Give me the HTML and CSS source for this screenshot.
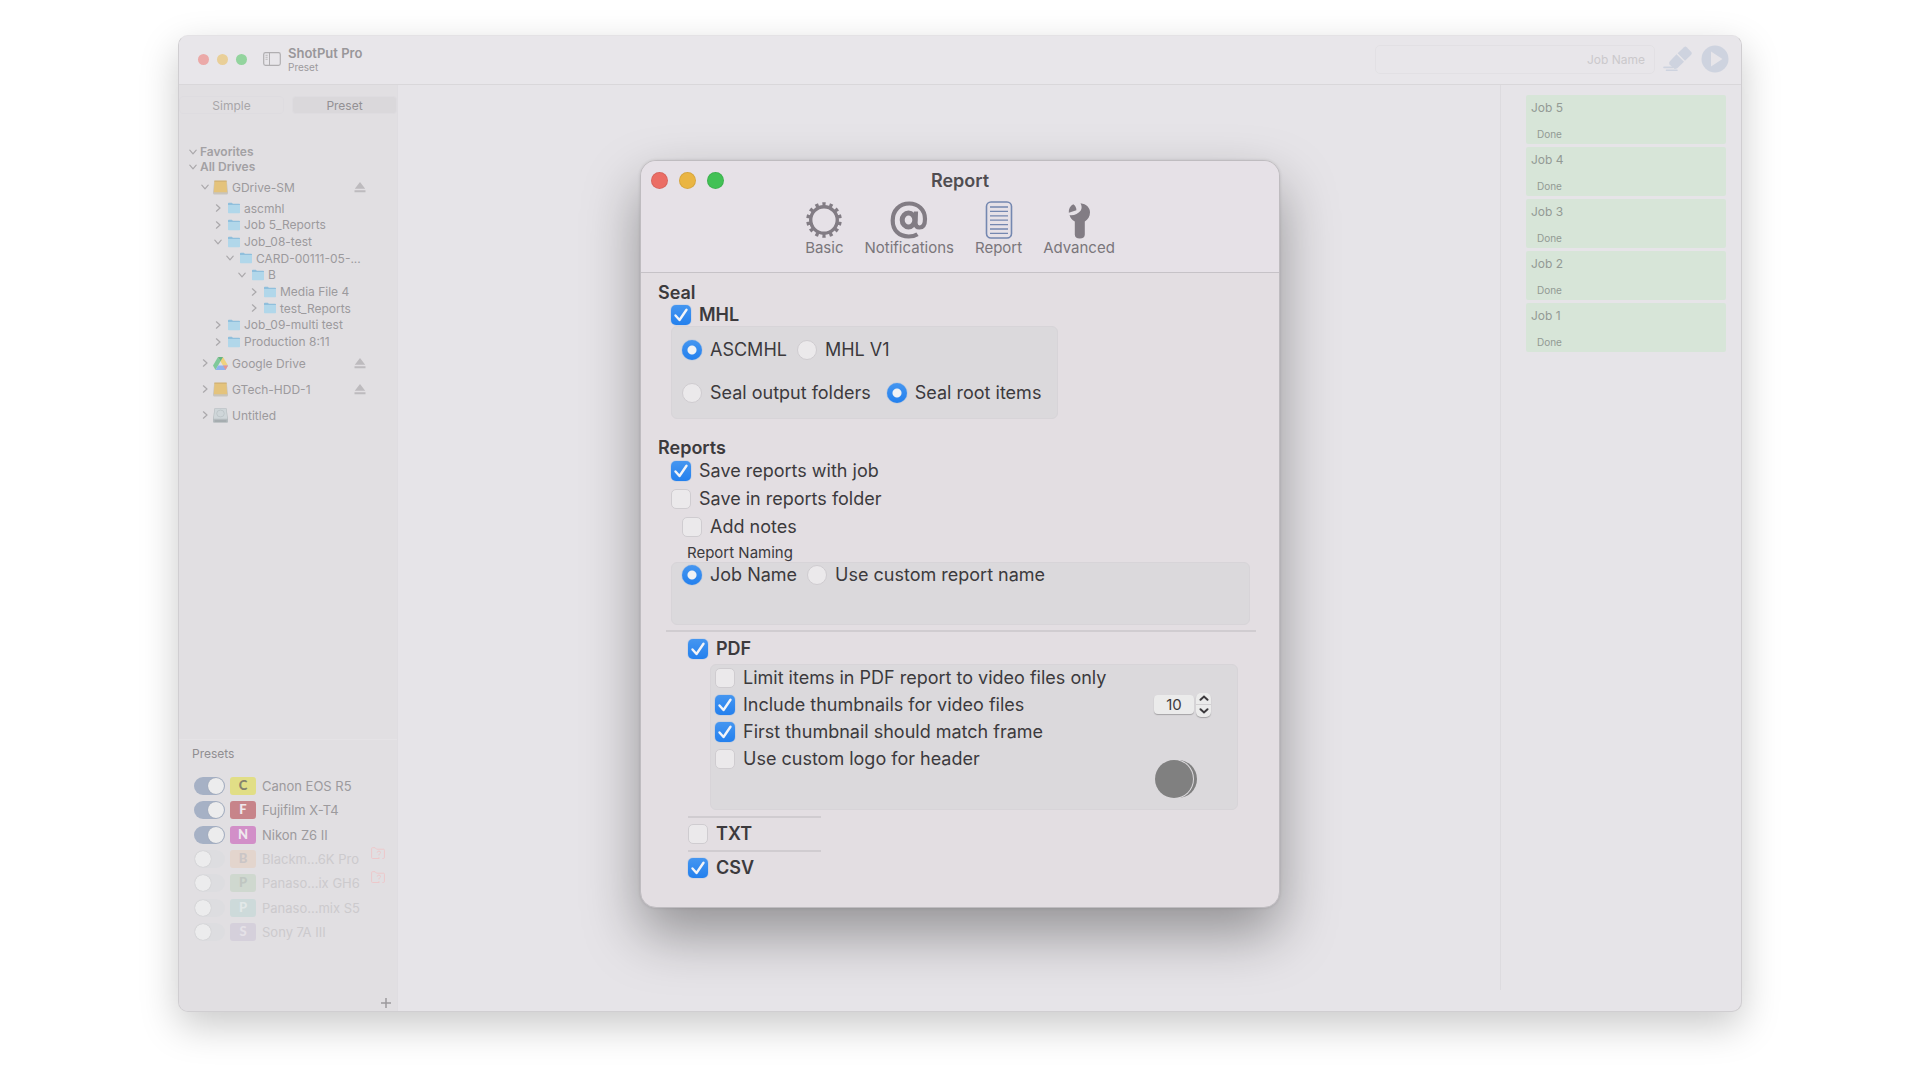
FILE: index.html
```
<!DOCTYPE html>
<html lang="en">
<head>
    <meta charset="UTF-8">
    <meta name="viewport" content="width=device-width, initial-scale=1.0">
    <title>ShotPut Pro - Report</title>
    <link rel="stylesheet" href="styles.css">
</head>
<body>
    <svg class="sprite" aria-hidden="true">
        <symbol id="down" viewBox="0 0 10 10"><path d="M1.8 3.2 5 6.8 8.2 3.2" fill="none" stroke="currentColor" stroke-width="1.2" stroke-linecap="round" stroke-linejoin="round"/></symbol>
        <symbol id="right" viewBox="0 0 10 10"><path d="M3.4 1.8 7 5 3.4 8.2" fill="none" stroke="currentColor" stroke-width="1.2" stroke-linecap="round" stroke-linejoin="round"/></symbol>
        <symbol id="folder" viewBox="0 0 12 12"><path d="M0 1.5q0-.8.8-.8h3l1.1 1h6.3q.8 0 .8.8V6H0z" fill="#90bfdc"/><path d="M0 3h12v7.6q0 .7-.7.7H.7q-.7 0-.7-.7z" fill="#b1d7ea"/></symbol>
        <symbol id="drive" viewBox="0 0 15 15"><path d="M1.2.5h12.6L15 12.6q0 1.9-1 1.9H1q-1 0-1-1.9z" fill="#c9c5bd"/><path d="M1.6.7h11.8l.8 11.6H.8z" fill="#e4c37c"/><path d="M1.6.7h11.8l.1 1.4h-12z" fill="#d5b575"/></symbol>
        <symbol id="eject" viewBox="0 0 12 11"><path d="M6 0l5.2 6.8H.8zM.5 8.2h11v2H.5z" fill="#bdbbbe"/></symbol>
        <symbol id="missing" viewBox="0 0 14 13"><path d="M8.5 11.5H1.6q-1 0-1-1V1.6q0-.9.9-.9h2.6l1.5 1.5h6.8q1 0 1 1v7.3q0 1-1 1h-1M6.2 5.6q.2-1.5 1.7-1.5t1.6 1.4q0 .8-.9 1.4-.7.5-.7 1.5M7.9 10.2v.8" fill="none" stroke="#edc8ca"/></symbol>
    </svg>

    <div class="desktop">
        <div class="window">
            <header class="titlebar">
                <div class="lights">
                    <button class="light red" aria-label="Close"></button>
                    <button class="light yellow" aria-label="Minimize"></button>
                    <button class="light green" aria-label="Zoom"></button>
                </div>
                <button class="sidebar-toggle" aria-label="Toggle sidebar">
                    <svg width="18" height="14" viewBox="0 0 18 14" fill="none" stroke="currentColor"><rect x=".7" y=".7" width="16.6" height="12.6" rx="1.8" stroke-width="1.2"/><path d="M6.5 1v12"/><path d="M2.5 3.3h2.2M2.5 5.3h2.2M2.5 7.3h2.2" stroke-width=".8"/></svg>
                </button>
                <div class="app-name">
                    <h1>ShotPut Pro</h1>
                    <p>Preset</p>
                </div>
                <input class="job-input" type="text" placeholder="Job Name" aria-label="Job Name">
                <button class="tool" aria-label="Clear">
                    <svg width="30" height="26" viewBox="0 0 30 26"><path d="M14.6 7.2 21 1.2q1.4-1.2 2.7 0l4.6 4.8q1.2 1.3-.1 2.7l-6.2 6z" fill="currentColor"/><path d="M13.5 8.2 21 15.8 14.5 22q-1.2 1-3 1L6.5 18.4q-1-1.6.4-3.2z" fill="currentColor"/><path d="M1 21.4h8.5M3.5 24.2h10.5" stroke="currentColor" stroke-width="1.6" stroke-linecap="round"/></svg>
                </button>
                <button class="tool" aria-label="Start">
                    <svg width="28" height="28" viewBox="0 0 28 28"><circle cx="14" cy="14" r="13.5" fill="currentColor"/><path d="M10 6.5v15L21.5 14z" fill="#e7e5e9"/></svg>
                </button>
            </header>

            <div class="content">
                <aside class="sidebar">
                    <div class="modes">
                        <button>Simple</button>
                        <button class="active">Preset</button>
                    </div>

                    <ul class="tree">
                        <li class="group"><svg class="arrow"><use href="#down"/></svg>Favorites</li>
                        <li class="group"><svg class="arrow"><use href="#down"/></svg>All Drives</li>
                        <li class="volume"><svg class="arrow"><use href="#down"/></svg><svg class="disk"><use href="#drive"/></svg>GDrive-SM
                            <button class="eject" aria-label="Eject GDrive-SM"><svg><use href="#eject"/></svg></button></li>
                        <li>
                            <ul class="folders">
                                <li><svg class="arrow"><use href="#right"/></svg><svg class="folder"><use href="#folder"/></svg>ascmhl</li>
                                <li><svg class="arrow"><use href="#right"/></svg><svg class="folder"><use href="#folder"/></svg>Job 5_Reports</li>
                                <li><svg class="arrow"><use href="#down"/></svg><svg class="folder"><use href="#folder"/></svg>Job_08-test</li>
                                <li class="depth-2"><svg class="arrow"><use href="#down"/></svg><svg class="folder"><use href="#folder"/></svg>CARD-00111-05-...</li>
                                <li class="depth-3"><svg class="arrow"><use href="#down"/></svg><svg class="folder"><use href="#folder"/></svg>B</li>
                                <li class="depth-4"><svg class="arrow"><use href="#right"/></svg><svg class="folder"><use href="#folder"/></svg>Media File 4</li>
                                <li class="depth-4"><svg class="arrow"><use href="#right"/></svg><svg class="folder"><use href="#folder"/></svg>test_Reports</li>
                                <li><svg class="arrow"><use href="#right"/></svg><svg class="folder"><use href="#folder"/></svg>Job_09-multi test</li>
                                <li><svg class="arrow"><use href="#right"/></svg><svg class="folder"><use href="#folder"/></svg>Production 8:11</li>
                            </ul>
                        </li>
                        <li class="volume"><svg class="arrow"><use href="#right"/></svg><svg class="disk" viewBox="0 0 15 15"><path d="M5 1h5l5 8.6h-5z" fill="#efd27e"/><path d="M5 1 0 9.6 2.5 14l5-8.7z" fill="#7fc99a"/><path d="M5 1h5L7.5 5.3z" fill="#66b583"/><path d="M5 9.6h10L12.5 14h-10z" fill="#8fb3ee"/><path d="M10 9.6h5L12.5 14z" fill="#e7958f"/></svg>Google Drive
                            <button class="eject" aria-label="Eject Google Drive"><svg><use href="#eject"/></svg></button></li>
                        <li class="volume"><svg class="arrow"><use href="#right"/></svg><svg class="disk"><use href="#drive"/></svg>GTech-HDD-1
                            <button class="eject" aria-label="Eject GTech-HDD-1"><svg><use href="#eject"/></svg></button></li>
                        <li class="volume"><svg class="arrow"><use href="#right"/></svg><svg class="disk" viewBox="0 0 15 15"><path d="M1.5.3h12L15 11v2.5q0 1.2-1 1.2H1q-1 0-1-1.2V11z" fill="#b5bcbf"/><path d="M2 .8h11l1.3 10H.7z" fill="#cfd6d9"/><ellipse cx="7.5" cy="5.5" rx="3.8" ry="3.4" fill="none" stroke="#bfc7ca"/><path d="M1.5 13h12" stroke="#969da0"/></svg>Untitled</li>
                    </ul>

                    <section class="presets">
                        <h2>Presets</h2>
                        <ul>
                            <li><label><input type="checkbox" role="switch" checked><span class="badge canon">C</span>Canon EOS R5</label></li>
                            <li><label><input type="checkbox" role="switch" checked><span class="badge fuji">F</span>Fujifilm X-T4</label></li>
                            <li><label><input type="checkbox" role="switch" checked><span class="badge nikon">N</span>Nikon Z6 II</label></li>
                            <li class="off"><label><input type="checkbox" role="switch"><span class="badge black">B</span>Blackm...6K Pro</label><svg class="missing"><use href="#missing"/></svg></li>
                            <li class="off"><label><input type="checkbox" role="switch"><span class="badge gh6">P</span>Panaso...ix GH6</label><svg class="missing"><use href="#missing"/></svg></li>
                            <li class="off"><label><input type="checkbox" role="switch"><span class="badge s5">P</span>Panaso...mix S5</label></li>
                            <li class="off"><label><input type="checkbox" role="switch"><span class="badge sony">S</span>Sony 7A III</label></li>
                        </ul>
                        <button class="add" aria-label="Add preset"><svg width="12" height="12" viewBox="0 0 12 12"><path d="M6 1v10M1 6h10" stroke="currentColor" stroke-width="1.5"/></svg></button>
                    </section>
                </aside>

                <main class="workspace"></main>

                <aside class="jobs">
                    <article class="job"><h3>Job 5</h3><p>Done</p></article>
                    <article class="job"><h3>Job 4</h3><p>Done</p></article>
                    <article class="job"><h3>Job 3</h3><p>Done</p></article>
                    <article class="job"><h3>Job 2</h3><p>Done</p></article>
                    <article class="job"><h3>Job 1</h3><p>Done</p></article>
                </aside>
            </div>
        </div>
    </div>

    <div class="overlay">
        <div class="dialog" role="dialog" aria-labelledby="dialogTitle">
            <header class="dialog-head">
                <div class="dialog-bar">
                    <div class="lights">
                        <button class="light red" aria-label="Close"></button>
                        <button class="light yellow" aria-label="Minimize"></button>
                        <button class="light green" aria-label="Zoom"></button>
                    </div>
                    <h2 id="dialogTitle">Report</h2>
                </div>
                <nav class="tabs">
                    <button>
                        <svg width="38" height="38" viewBox="0 0 38 38" fill="none" stroke="currentColor"><circle cx="19" cy="19" r="13.3" stroke-width="3.4"/><circle cx="19" cy="19" r="15.8" stroke-width="4" pathLength="140" stroke-dasharray="4.6 5.4" stroke-dashoffset="2.3" transform="rotate(-90 19 19)"/></svg>
                        Basic
                    </button>
                    <button>
                        <svg width="38" height="38" viewBox="0 0 38 38" fill="none" stroke="currentColor"><ellipse cx="18.5" cy="19" rx="6.3" ry="7" stroke-width="5"/><path d="M26 10.5 25.5 22q0 4.5 4 4.5 5.5 0 5.5-8.5C35 8.5 28 2.5 19.3 2.5 9.5 2.5 2.7 9.5 2.7 19.5c0 9.5 6 16 16 16 3.5 0 6.3-.7 8.8-2.3" stroke-width="4.2"/></svg>
                        Notifications
                    </button>
                    <button aria-current="page">
                        <svg width="38" height="38" viewBox="0 0 38 38" fill="none" stroke="#7487b0"><rect x="6.5" y="1" width="25" height="36" rx="4.5" stroke-width="1.6"/><path d="M10 6h18M10 10.4h18M10 14.8h18M10 19.2h18M10 23.6h18M10 28h18M10 32.4h18" stroke-width="1.3"/></svg>
                        Report
                    </button>
                    <button>
                        <svg width="38" height="38" viewBox="0 0 38 38" fill="currentColor"><path d="M20.5 2.2c6 .8 9.5 4.500 9.500 9 0 4.300-2 7.300-5.200 9.300V33.500q0 4-5 4t-5-4V20.500c-2.800-1.300-4.700-3.600-5.200-6.500 4 .8 8.500-1.300 11-4.300 1.500-2.300 1.300-5-.1-7.500z"/><path d="M13.200 3.300c2 .8 3.300 3.800 3.200 6l-7.600 2.500c-.4-3.600 1.300-6.900 4.400-8.500z"/></svg>
                        Advanced
                    </button>
                </nav>
            </header>

            <form class="dialog-body">
                <section class="seal">
                    <h3>Seal</h3>
                    <label class="option strong"><input type="checkbox" checked>MHL</label>
                    <div class="panel seal-panel">
                        <div class="row">
                            <label class="option"><input type="radio" name="format" checked>ASCMHL</label>
                            <label class="option"><input type="radio" name="format">MHL V1</label>
                        </div>
                        <div class="row wide">
                            <label class="option"><input type="radio" name="target">Seal output folders</label>
                            <label class="option"><input type="radio" name="target" checked>Seal root items</label>
                        </div>
                    </div>
                </section>

                <section class="reports">
                    <h3>Reports</h3>
                    <div class="stack">
                        <label class="option"><input type="checkbox" checked>Save reports with job</label>
                        <label class="option"><input type="checkbox">Save in reports folder</label>
                        <label class="option nested"><input type="checkbox">Add notes</label>
                    </div>
                    <p class="caption">Report Naming</p>
                    <div class="panel naming-panel">
                        <div class="row">
                            <label class="option"><input type="radio" name="naming" checked>Job Name</label>
                            <label class="option"><input type="radio" name="naming">Use custom report name</label>
                        </div>
                    </div>
                </section>
                <hr>

                <section class="formats">
                    <label class="option strong"><input type="checkbox" checked>PDF</label>
                    <div class="panel pdf-panel">
                        <div class="stack">
                            <label class="option"><input type="checkbox">Limit items in PDF report to video files only</label>
                            <label class="option"><input type="checkbox" checked>Include thumbnails for video files</label>
                            <label class="option"><input type="checkbox" checked>First thumbnail should match frame</label>
                            <label class="option"><input type="checkbox">Use custom logo for header</label>
                        </div>
                        <div class="side">
                            <div class="counter">
                                <input type="text" value="10" aria-label="Number of thumbnails">
                                <div class="stepper">
                                    <button type="button" aria-label="Increase"><svg width="10" height="6" viewBox="0 0 10 6"><path d="M1.5 4.8 5 1.5l3.5 3.3"/></svg></button>
                                    <button type="button" aria-label="Decrease"><svg width="10" height="6" viewBox="0 0 10 6"><path d="M1.5 1.2 5 4.5l3.5-3.3"/></svg></button>
                                </div>
                            </div>
                            <svg class="logo" width="44" height="40" viewBox="0 0 44 40" fill="#808080"><circle cx="24" cy="20" r="19"/><circle cx="20" cy="20" r="20" fill="#dbd9dc"/><circle cx="20" cy="20" r="19"/></svg>
                        </div>
                    </div>
                    <hr>
                    <label class="option strong"><input type="checkbox">TXT</label>
                    <hr>
                    <label class="option strong"><input type="checkbox" checked>CSV</label>
                </section>
            </form>
        </div>
    </div>
</body>
</html>
```

FILE: styles.css
```
:root {
    --window: #e6e4e8;
    --faded: #9c9a9d;
    --panel: #dbd9dc;
    --text: #3c3a3d;
}

* {
    box-sizing: border-box;
    margin: 0;
    padding: 0;
    font-family: Inter, 'Liberation Sans', sans-serif;
}

body {
    background: white;
    color: var(--text);
}

button {
    background: none;
    border: none;
    color: inherit;
}

ul {
    list-style: none;
}

.sprite {
    display: none;
}

/* main window */

.desktop {
    display: flex;
    min-height: 100vh;
    padding: 35px 178px 68px;
}

.window {
    display: flex;
    flex-direction: column;
    flex: 1;
    overflow: hidden;
    background: var(--window);
    border: 1px solid #d0ced1;
    border-top-color: #e4e2e5;
    border-radius: 10px;
    box-shadow: 0 14px 38px rgba(0, 0, 0, 0.21);
    color: var(--faded);
    font-size: 12px;
}

.titlebar {
    display: flex;
    align-items: center;
    height: 49px;
    padding: 0 12px 2px 19px;
    background: #e8e6ea;
    border-bottom: 1px solid #d9d7da;
}

.lights {
    display: flex;
    gap: 8px;
}

.light {
    width: 11px;
    height: 11px;
    border-radius: 50%;
}

.light.red {
    background: #eba9a8;
}

.light.yellow {
    background: #e9cf98;
}

.light.green {
    background: #93d49e;
}

.sidebar-toggle {
    display: flex;
    margin: 0 7px 0 16px;
    color: #b0aeb1;
}

.app-name h1 {
    color: #99979a;
    font-size: 13px;
    font-weight: 600;
    line-height: 15px;
}

.app-name p {
    font-size: 10px;
    line-height: 12px;
}

.job-input {
    width: 280px;
    height: 29px;
    margin-left: auto;
    padding: 0 9px;
    background: none;
    border: 1px solid #e2e0e4;
    border-radius: 5px;
    font-size: 12px;
    text-align: right;
}

.job-input::placeholder {
    color: #cbc9cc;
}

.tool {
    display: flex;
    margin-left: 8px;
    color: #ced3df;
}

.content {
    display: flex;
    flex: 1;
}

/* sidebar */

.sidebar {
    display: flex;
    flex-direction: column;
    width: 219px;
    background: #e1dfe2;
    border-right: 1px solid #dfdde1;
}

.modes {
    display: grid;
    grid-template-columns: 1fr 1fr;
    gap: 8px;
    padding-top: 11px;
}

.modes button {
    height: 18px;
    border: 1px solid #dedce0;
    border-radius: 4px;
    color: #a8a6a9;
    font-size: 12px;
}

.modes .active {
    background: #dad8db;
    color: #939194;
}

.tree {
    margin-top: 30px;
}

.tree svg {
    flex: none;
}

.arrow {
    width: 10px;
    height: 10px;
    color: #aaa8ab;
}

.group {
    display: flex;
    align-items: center;
    gap: 2px;
    height: 15px;
    padding-left: 9px;
    color: #a3a1a4;
    font-weight: 600;
}

.volume {
    display: flex;
    align-items: center;
    height: 26px;
    padding-left: 21px;
}

.disk {
    width: 15px;
    height: 15px;
    margin: 0 4px 0 3px;
}

.eject {
    display: flex;
    margin: 0 31px 0 auto;
}

.eject svg {
    width: 12px;
    height: 11px;
}

.folders {
    display: grid;
    grid-auto-rows: 1fr;
    height: 150px;
}

.folders li {
    display: flex;
    align-items: center;
    padding-left: 34px;
}

.folders .depth-2 {
    padding-left: 46px;
}

.folders .depth-3 {
    padding-left: 58px;
}

.folders .depth-4 {
    padding-left: 70px;
}

.folder {
    width: 12px;
    height: 12px;
    margin: 0 4px 0 5px;
}

.presets {
    display: flex;
    flex-direction: column;
    height: 272px;
    margin-top: auto;
    padding: 5px 0 2px;
    border-top: 1px solid #e5e3e6;
}

.presets h2 {
    padding-left: 13px;
    color: #908e91;
    font-size: 12px;
    font-weight: 400;
    line-height: 18px;
}

.presets ul {
    display: grid;
    grid-auto-rows: 1fr;
    height: 170px;
    margin-top: 11px;
}

.presets li {
    display: flex;
    justify-content: space-between;
    padding: 0 12px 0 15px;
    font-size: 13px;
}

.presets label {
    display: flex;
    align-items: center;
}

.presets input {
    appearance: none;
    width: 31px;
    height: 18px;
    padding: 1px;
    background: #dddde0;
    border-radius: 9px;
}

.presets input::before {
    content: '';
    display: block;
    width: 16px;
    height: 16px;
    border-radius: 50%;
    background: #ececed;
    box-shadow: 0 0 1px rgba(0, 0, 0, 0.2);
}

.presets input:checked {
    background: #a6b1c5;
}

.presets input:checked::before {
    margin-left: auto;
}

.badge {
    width: 26px;
    height: 18px;
    margin: 0 6px 0 5px;
    border-radius: 3px;
    color: #efe8ed;
    font-family: Lato, sans-serif;
    font-size: 13px;
    font-weight: 900;
    line-height: 17px;
    text-align: center;
}

.canon {
    background: #e1de86;
    color: #85836d;
}

.fuji {
    background: #c7848a;
}

.nikon {
    background: #d28fc8;
}

.black {
    background: #e3d5cd;
    color: #cac5c6;
}

.gh6 {
    background: #cfd8cf;
    color: #bfc6c1;
}

.s5 {
    background: #cddada;
    color: #e2e8e8;
}

.sony {
    background: #d5d0db;
    color: #e5e2e8;
}

.off {
    color: #cccacd;
}

.missing {
    width: 14px;
    height: 13px;
}

.add {
    display: flex;
    margin: auto 5px 0 auto;
}

/* job queue */

.workspace {
    flex: 1;
}

.jobs {
    display: flex;
    flex-direction: column;
    gap: 3px;
    width: 241px;
    margin-bottom: 21px;
    padding: 10px 15px 0 25px;
    border-left: 1px solid #dddbdf;
}

.job {
    height: 49px;
    padding: 5px;
    background: #d7e5d8;
    border-radius: 2px;
}

.job h3 {
    color: #939a95;
    font-size: 12px;
    font-weight: 400;
    line-height: 16px;
}

.job p {
    margin-top: 12px;
    padding-left: 6px;
    color: #929a94;
    font-size: 10px;
    line-height: 12px;
}

/* report dialog */

.overlay {
    position: absolute;
    inset: 0;
    display: flex;
    align-items: center;
    justify-content: center;
    padding-bottom: 13px;
}

.dialog {
    width: 640px;
    overflow: hidden;
    background: #e3dee2;
    border: 1px solid #bfbcc0;
    border-radius: 16px;
    box-shadow: 0 0 3px rgba(0, 0, 0, 0.12), 0 26px 56px rgba(0, 0, 0, 0.36);
}

.dialog-head {
    height: 112px;
    background: #e6e1e7;
    border-bottom: 1px solid #c6c2c7;
}

.dialog-bar {
    display: grid;
    grid-template-columns: 1fr auto 1fr;
    align-items: center;
    height: 40px;
}

.dialog-bar .lights {
    gap: 11px;
    padding-left: 10px;
}

.dialog-bar .light {
    width: 17px;
    height: 17px;
    border: 1px solid rgba(0, 0, 0, 0.08);
}

.dialog-bar .red {
    background: #eb6d65;
}

.dialog-bar .yellow {
    background: #eab543;
}

.dialog-bar .green {
    background: #42c155;
}

.dialog-bar h2 {
    color: #504d51;
    font-size: 18px;
    font-weight: 600;
}

.tabs {
    display: flex;
    justify-content: center;
    gap: 21px;
}

.tabs button {
    display: flex;
    flex-direction: column;
    align-items: center;
    color: #7a767b;
    font-size: 15px;
    line-height: 17px;
}

.tabs svg {
    color: #827c84;
}

.dialog-body {
    padding: 9px 23px 23px 17px;
    font-size: 18px;
}

.dialog-body h3 {
    font-size: 18px;
    font-weight: 600;
    line-height: 22px;
}

.dialog-body hr {
    border: none;
    border-top: 2px solid #d0ccd0;
}

.option {
    display: flex;
    align-items: center;
    gap: 8px;
    height: 24px;
    white-space: nowrap;
}

.strong {
    font-weight: 600;
}

.option input {
    appearance: none;
    flex: none;
    width: 20px;
    height: 20px;
    background: #ebe9eb;
    border: 1px solid #cfccd0;
    border-radius: 5px;
}

.option input[type="radio"] {
    border-radius: 50%;
}

.option input:checked {
    border: none;
    background: linear-gradient(#4596f0, #2380ee);
    box-shadow: 0 0 1px #2c83e8;
}

.option input[type="checkbox"]:checked {
    background: url("data:image/svg+xml,%3Csvg xmlns='http://www.w3.org/2000/svg' viewBox='0 0 20 20'%3E%3Cpath d='M4.5 10.5 8.5 15 15.5 4.8' fill='none' stroke='%23f2f4f8' stroke-width='2.4' stroke-linecap='round' stroke-linejoin='round'/%3E%3C/svg%3E"), linear-gradient(#4596f0, #2380ee);
}

.option input[type="radio"]:checked {
    background: radial-gradient(circle, #f0f2f5 0 4px, transparent 5px), linear-gradient(#4596f0, #2380ee);
}

.panel {
    background: var(--panel);
    border: 1px solid #d7d4d8;
    border-radius: 6px;
}

.row {
    display: flex;
    gap: 10px;
}

.row.wide {
    gap: 16px;
}

.seal > .option {
    height: 22px;
    margin-left: 13px;
}

.seal-panel {
    display: flex;
    flex-direction: column;
    gap: 19px;
    width: 387px;
    height: 93px;
    margin-left: 13px;
    padding: 11px 10px;
}

.reports {
    margin-top: 18px;
}

.reports .stack,
.naming-panel {
    margin-left: 13px;
}

.reports .stack {
    display: grid;
    gap: 4px;
}

.nested {
    margin-left: 11px;
}

.caption {
    margin-left: 29px;
    padding-top: 4px;
    font-size: 15px;
    line-height: 19px;
}

.naming-panel {
    height: 63px;
    margin-right: 6px;
    padding-left: 10px;
}

.reports + hr {
    margin: 5px 0 0 8px;
}

.formats {
    padding: 5px 18px 0 30px;
}

.pdf-panel {
    display: flex;
    justify-content: space-between;
    height: 146px;
    margin: 3px 0 6px 22px;
    padding: 0 26px 0 4px;
}

.pdf-panel .stack {
    display: grid;
    align-content: start;
    gap: 3px;
    padding-top: 1px;
}

.formats hr {
    width: 133px;
}

.formats hr + .option {
    height: 32px;
}

.side {
    display: flex;
    flex-direction: column;
    justify-content: space-between;
    padding: 28px 0 10px;
}

.counter {
    display: flex;
    align-items: center;
    gap: 2px;
}

.counter input {
    width: 40px;
    height: 19px;
    background: #ebebeb;
    border: none;
    border-radius: 4px;
    box-shadow: 0 1px 1px rgba(0, 0, 0, 0.25);
    color: var(--text);
    font-size: 15px;
    text-align: center;
}

.stepper {
    display: grid;
    width: 15px;
    height: 24px;
    background: #ebebeb;
    border-radius: 5px;
    box-shadow: 0 1px 1px rgba(0, 0, 0, 0.25);
}

.stepper button {
    display: flex;
    align-items: center;
    justify-content: center;
}

.stepper button + button {
    border-top: 1px solid #d2d0d2;
}

.stepper path {
    fill: none;
    stroke: #3c3a3d;
    stroke-width: 2;
    stroke-linecap: round;
}
```
